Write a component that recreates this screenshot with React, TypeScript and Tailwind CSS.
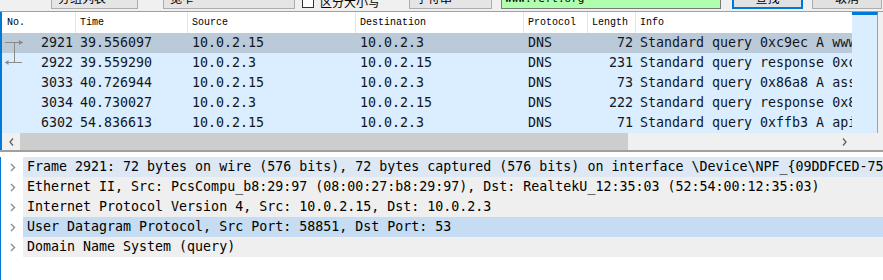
import React from "react";

const rows = [
  ["2921", "39.556097", "10.0.2.15", "10.0.2.3", "DNS", "72", "Standard query 0xc9ec A www.fefl.org"],
  ["2922", "39.559290", "10.0.2.3", "10.0.2.15", "DNS", "231", "Standard query response 0xc9ec A www.fefl.org"],
  ["3033", "40.726944", "10.0.2.15", "10.0.2.3", "DNS", "73", "Standard query 0x86a8 A assets.fefl.org"],
  ["3034", "40.730027", "10.0.2.3", "10.0.2.15", "DNS", "222", "Standard query response 0x86a8 A assets.fefl.org"],
  ["6302", "54.836613", "10.0.2.15", "10.0.2.3", "DNS", "71", "Standard query 0xffb3 A api.fefl.org"],
];

const details = [
  { text: "Frame 2921: 72 bytes on wire (576 bits), 72 bytes captured (576 bits) on interface \\Device\\NPF_{09DDFCED-7541-4C2B}", bg: "bg-[#dde8f4]" },
  { text: "Ethernet II, Src: PcsCompu_b8:29:97 (08:00:27:b8:29:97), Dst: RealtekU_12:35:03 (52:54:00:12:35:03)", bg: "bg-[#efefef]" },
  { text: "Internet Protocol Version 4, Src: 10.0.2.15, Dst: 10.0.2.3", bg: "bg-[#efefef]" },
  { text: "User Datagram Protocol, Src Port: 58851, Dst Port: 53", bg: "bg-[#c5dcf2]" },
  { text: "Domain Name System (query)", bg: "bg-[#efefef]" },
];

const cols = "grid grid-cols-[74px_112px_168px_168px_64px_48px_216px]";

function Chevron() {
  return (
    <svg width="6" height="9" viewBox="0 0 6 9" className="shrink-0">
      <polyline points="1,1 4.5,4.5 1,8" fill="none" stroke="#8c8c8c" strokeWidth="1.4" />
    </svg>
  );
}

function Combo({ label, w }: { label: string; w: string }) {
  return (
    <div className={`${w} h-[22px] border border-[#adadad] bg-[#e5e5e5] flex items-center justify-between px-[6px]`}>
      <span className="text-[12px] leading-none">{label}</span>
      <svg width="9" height="6" viewBox="0 0 9 6">
        <polyline points="1,1 4.5,4.5 8,1" fill="none" stroke="#444" strokeWidth="1" />
      </svg>
    </div>
  );
}

export default function App() {
  return (
    <div className="w-[883px] h-[280px] bg-white overflow-hidden text-black">
      {/* find bar, mostly scrolled off the top */}
      <div className="h-[11px] bg-[#f0f0f0] overflow-hidden flex items-end pb-[2px] font-['Noto_Sans_CJK_SC',sans-serif]">
        <div className="flex items-end">
          <div className="ml-[51px]"><Combo label="分组列表" w="w-[87px]" /></div>
          <div className="ml-[25px]"><Combo label="宽窄" w="w-[132px]" /></div>
          <div className="ml-[7px] flex items-end gap-[6px]">
            <div className="w-[12px] h-[12px] border border-[#333] bg-white mb-[1px]" />
            <span className="text-[12px] leading-none mb-[1px]">区分大小写</span>
          </div>
          <div className="ml-[29px]"><Combo label="字符串" w="w-[83px]" /></div>
          <div className="ml-[9px] w-[220px] h-[22px] border border-[#7a7a7a] bg-[#afffaf] flex items-center px-[3px]">
            <span className="font-['DejaVu_Sans_Mono',monospace] text-[11px] leading-none">www.fefl.org</span>
          </div>
          <div className="ml-[11px] w-[71px] h-[22px] border-2 border-[#0078d7] bg-[#e1e1e1] flex items-center justify-center text-[12px]">查找</div>
          <div className="ml-[9px] w-[70px] h-[22px] border border-[#adadad] bg-[#e1e1e1] flex items-center justify-center text-[12px]">取消</div>
        </div>
      </div>

      {/* packet list */}
      <div className="border-t border-[#a0a0a0] flex h-[139px]">
        <div className="w-[852px] border-l-2 border-[#0078d7] flex flex-col overflow-hidden">
          <div className={`${cols} h-[21px] items-center font-['Liberation_Mono',monospace] text-[10px] bg-white`}>
            <div className="pl-[5px] h-full flex items-center border-r border-[#e5e5e5]">No.</div>
            <div className="pl-[4px] h-full flex items-center border-r border-[#e5e5e5]">Time</div>
            <div className="pl-[4px] h-full flex items-center border-r border-[#e5e5e5]">Source</div>
            <div className="pl-[4px] h-full flex items-center border-r border-[#e5e5e5]">Destination</div>
            <div className="pl-[4px] h-full flex items-center border-r border-[#e5e5e5]">Protocol</div>
            <div className="pl-[4px] h-full flex items-center border-r border-[#e5e5e5]">Length</div>
            <div className="pl-[4px] h-full flex items-center">Info</div>
          </div>
          {rows.map((r, i) => (
            <div
              key={r[0]}
              className={`${cols} h-[20px] items-center font-['DejaVu_Sans_Mono',monospace] text-[13.3px] text-[#12161a] whitespace-nowrap ${i === 0 ? "bg-[#bbcad8]" : "bg-[#daeeff]"}`}
            >
              <div className="relative text-right pr-[3px]">
                {i === 0 && (
                  <svg className="absolute left-[2px] top-[7px] z-10 overflow-visible" width="20" height="24" viewBox="0 0 20 24">
                    <line x1="1" y1="2.5" x2="19" y2="2.5" stroke="#8a8a8a" />
                    <polygon points="15,0 19,2.5 15,5" fill="#8a8a8a" />
                    <line x1="10.5" y1="2.5" x2="10.5" y2="22.5" stroke="#8a8a8a" />
                    <line x1="1" y1="22.5" x2="18" y2="22.5" stroke="#8a8a8a" />
                    <polygon points="4.5,20 1,22.5 4.5,25" fill="#8a8a8a" />
                  </svg>
                )}
                {r[0]}
              </div>
              <div className="pl-[4px]">{r[1]}</div>
              <div className="pl-[4px]">{r[2]}</div>
              <div className="pl-[4px]">{r[3]}</div>
              <div className="pl-[4px]">{r[4]}</div>
              <div className="text-right pr-[3px]">{r[5]}</div>
              <div className="pl-[4px] overflow-hidden">{r[6]}</div>
            </div>
          ))}
          {/* horizontal scrollbar */}
          <div className="h-[17px] bg-[#f0f0f0] flex items-center">
            <div className="w-[18px] flex justify-center">
              <svg width="5" height="8" viewBox="0 0 5 8"><polyline points="4,0.5 1,4 4,7.5" fill="none" stroke="#606060" strokeWidth="1.3" /></svg>
            </div>
            <div className="w-[608px] h-full bg-[#cdcdcd]" />
            <div className="flex-1 flex justify-end pr-[5px]">
              <svg width="5" height="8" viewBox="0 0 5 8"><polyline points="1,0.5 4,4 1,7.5" fill="none" stroke="#606060" strokeWidth="1.3" /></svg>
            </div>
          </div>
        </div>
        {/* minimap scrollbar */}
        <div className="w-[31px] flex flex-col bg-[#f0f0f0]">
          <div className="h-[121px] w-[26px] bg-[#daeeff] border-r border-[#a0a0a0] border-t-[3px] border-t-[#0078d7]" />
        </div>
      </div>

      {/* splitter */}
      <div className="h-[2px] bg-[#a0a0a0]" />
      <div className="h-[5px]" />

      {/* packet details */}
      <div className="border-l border-[#0078d7] h-[123px]">
        {details.map((d) => (
          <div key={d.text} className="flex h-[20px] items-center">
            <div className="w-[22px] flex justify-center pl-[1px]">
              <Chevron />
            </div>
            <div className={`flex-1 h-full flex items-center pl-[4px] ${d.bg} overflow-hidden whitespace-nowrap font-['DejaVu_Sans_Mono',monospace] text-[13.3px]`}>
              {d.text}
            </div>
          </div>
        ))}
      </div>
    </div>
  );
}
